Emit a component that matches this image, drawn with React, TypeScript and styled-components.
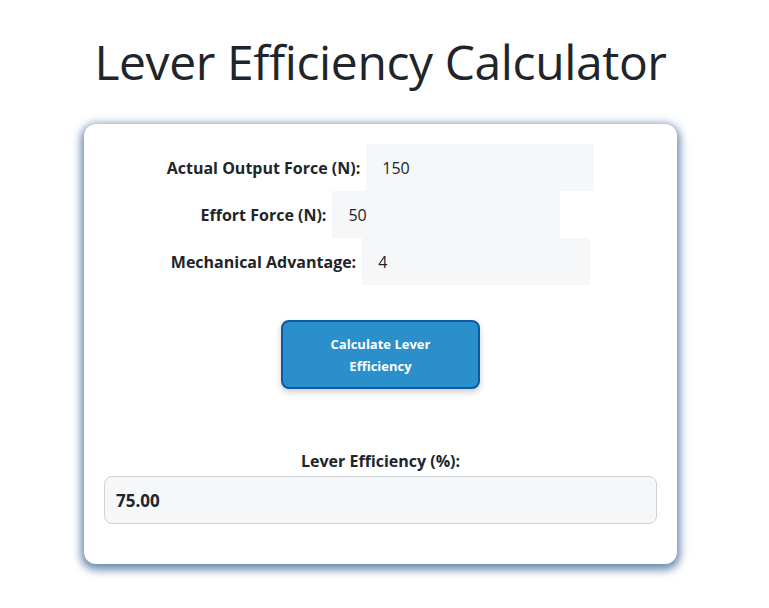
import { useState } from "react";
import styled, { createGlobalStyle } from "styled-components";

const GlobalStyle = createGlobalStyle`
	body {
		margin: 0;
		background: #ffffff;
		font-family: "Open Sans", "Noto Sans", sans-serif;
		color: #212529;
	}
`;

const Page = styled.div`
	display: flex;
	flex-direction: column;
	align-items: center;
	padding: 28px 8px 40px 0;
`;

const Title = styled.h1`
	margin: 0 0 29px;
	font-size: 48px;
	font-weight: 400;
	letter-spacing: -0.4px;
	line-height: 1.4;
	color: #212529;
`;

const Card = styled.div`
	width: 593px;
	box-sizing: border-box;
	padding: 20px 20px 40px;
	background: #ffffff;
	border-radius: 12px;
	box-shadow: 0 3px 9px 3px rgba(60, 100, 150, 0.75);
	display: flex;
	flex-direction: column;
	align-items: center;
`;

const Row = styled.div`
	display: flex;
	align-items: center;
	justify-content: center;
`;

const Label = styled.label`
	font-weight: 700;
	font-size: 16px;
	letter-spacing: 0;
	margin-right: 6px;
`;

const Input = styled.input`
	width: 228px;
	height: 47px;
	box-sizing: border-box;
	border: none;
	background: #f6f7f9;
	padding: 0 16px;
	font-family: inherit;
	font-size: 16px;
	color: #212529;
	outline: none;
`;

const Button = styled.button`
	margin-top: 35px;
	width: 199px;
	height: 69px;
	padding: 0 40px;
	background: #2a8fcb;
	border: 2px solid #0c5aa6;
	border-radius: 8px;
	color: #ffffff;
	font-family: inherit;
	font-weight: 700;
	font-size: 13px;
	line-height: 22px;
	box-shadow: 0 3px 6px rgba(0, 0, 0, 0.2);
	cursor: pointer;
`;

const ResultLabel = styled.div`
	margin-top: 61px;
	margin-bottom: 4px;
	font-weight: 700;
	font-size: 16px;
`;

const ResultBox = styled.div`
	align-self: stretch;
	height: 48px;
	box-sizing: border-box;
	display: flex;
	align-items: center;
	padding: 0 11px;
	background: #f6f7f9;
	border: 1px solid #cfd2d6;
	border-radius: 8px;
	font-weight: 700;
	font-size: 17px;
`;

export default function App() {
	const [output, setOutput] = useState("150");
	const [effort, setEffort] = useState("50");
	const [ma, setMa] = useState("4");
	const [result, setResult] = useState("75.00");

	const calculate = () => {
		const o = parseFloat(output);
		const e = parseFloat(effort);
		const m = parseFloat(ma);
		if (e && m) setResult(((o / e / m) * 100).toFixed(2));
	};

	return (
		<Page>
			<GlobalStyle />
			<Title>Lever Efficiency Calculator</Title>
			<Card>
				<Row>
					<Label>Actual Output Force (N):</Label>
					<Input value={output} onChange={(e) => setOutput(e.target.value)} />
				</Row>
				<Row>
					<Label>Effort Force (N):</Label>
					<Input value={effort} onChange={(e) => setEffort(e.target.value)} />
				</Row>
				<Row>
					<Label>Mechanical Advantage:</Label>
					<Input value={ma} onChange={(e) => setMa(e.target.value)} />
				</Row>
				<Button onClick={calculate}>Calculate Lever Efficiency</Button>
				<ResultLabel>Lever Efficiency (%):</ResultLabel>
				<ResultBox>{result}</ResultBox>
			</Card>
		</Page>
	);
}
